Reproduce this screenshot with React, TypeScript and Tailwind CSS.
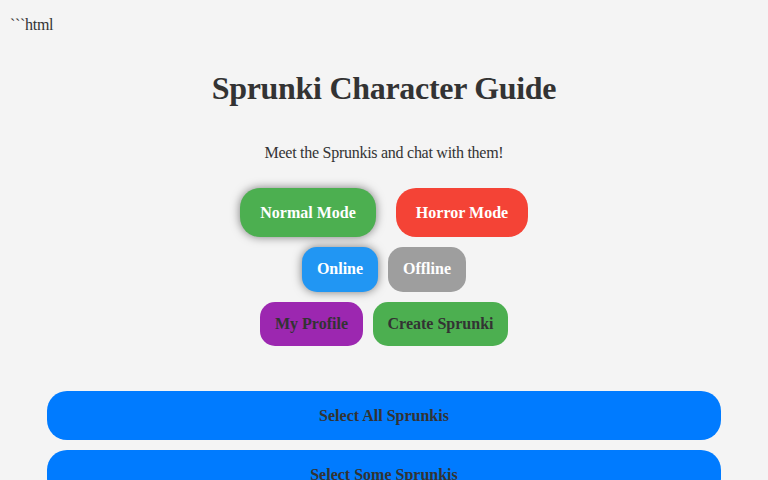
export default function App() {
  return (
    <div className="min-h-screen bg-[#f4f4f4] text-[#333] font-['Liberation_Serif',serif] text-[16px]">
      <div className="px-[10px] pt-[16px] leading-[18px] tracking-[-0.3px]">```html</div>
      <h1 className="mt-[36px] text-center text-[32px] font-bold leading-[37px] tracking-[-0.3px]">
        Sprunki Character Guide
      </h1>
      <p className="mt-[37px] text-center leading-[18px] tracking-[-0.27px]">
        Meet the Sprunkis and chat with them!
      </p>

      <div className="mt-[26px] flex justify-center gap-[20px]">
        <button className="h-[49px] w-[136px] rounded-[20px] bg-[#4caf50] font-bold text-white shadow-[0_0_10px_rgba(0,0,0,0.5)]">
          Normal Mode
        </button>
        <button className="h-[49px] w-[132px] rounded-[20px] bg-[#f44336] font-bold text-white">
          Horror Mode
        </button>
      </div>

      <div className="mt-[10px] flex justify-center gap-[10px]">
        <button className="h-[45px] w-[76px] rounded-[15px] bg-[#2196f3] pb-[1px] font-bold text-white shadow-[0_0_10px_rgba(0,0,0,0.5)]">
          Online
        </button>
        <button className="h-[45px] w-[78px] rounded-[15px] bg-[#9e9e9e] pb-[1px] font-bold text-white">
          Offline
        </button>
      </div>

      <div className="mt-[10px] flex justify-center gap-[10px]">
        <button className="h-[44px] w-[103px] rounded-[15px] bg-[#9c27b0] font-bold text-[#333]">
          My Profile
        </button>
        <button className="h-[44px] w-[135px] rounded-[15px] bg-[#4caf50] font-bold text-[#333]">
          Create Sprunki
        </button>
      </div>

      <div className="mx-auto mt-[45px] flex w-[674px] flex-col gap-[10px]">
        <button className="h-[49px] w-full rounded-[20px] bg-[#007bff] font-bold text-[#333]">
          Select All Sprunkis
        </button>
        <button className="h-[49px] w-full rounded-[20px] bg-[#007bff] font-bold text-[#333]">
          Select Some Sprunkis
        </button>
      </div>
    </div>
  );
}
